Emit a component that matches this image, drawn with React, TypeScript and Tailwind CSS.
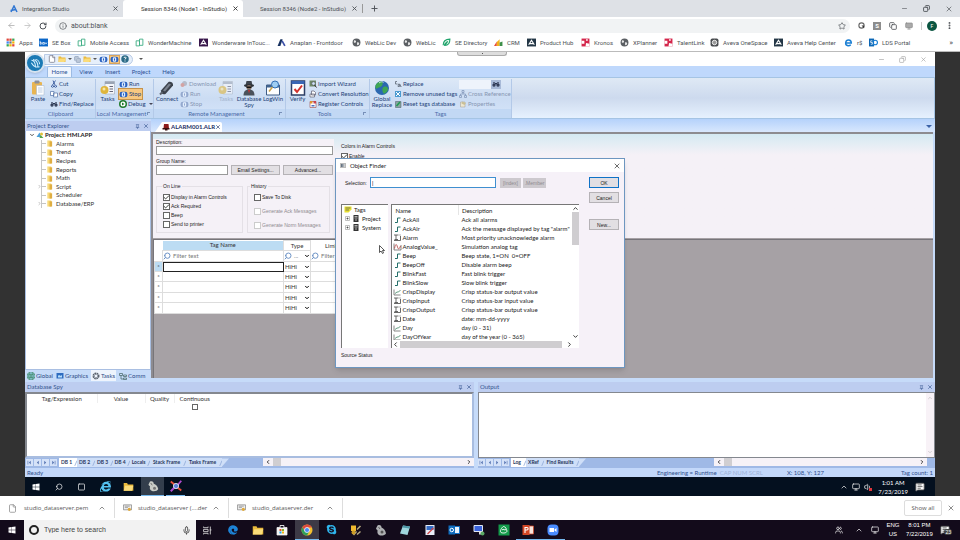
import React, { useState } from 'react';
import {
  ArrowLeft, ArrowRight, Check, ChevronDown, ChevronRight, ChevronUp, Copy, File, Globe, Info,
  MessageSquareText, Mic, Minus, Monitor, MoreVertical, Pin, Plus, RotateCw, Search, Square, Star, Users, Volume1, X,
} from 'lucide-react';
import { FaWindows, FaSkype, FaEdge, FaInternetExplorer } from 'react-icons/fa';

type Kind = 'step' | 'text' | 'wave' | 'line';

const BOOKMARKS: { label: string; icon: string; width: string }[] = [
  { label: 'Apps', icon: 'apps', width: 'w-[33px]' },
  { label: 'SE Box', icon: 'box', width: 'w-[38px]' },
  { label: 'Mobile Access', icon: 'mobile', width: 'w-[58px]' },
  { label: 'WonderMachine', icon: 'mobile', width: 'w-[64px]' },
  { label: 'Wonderware InTouc...', icon: 'avevaPurple', width: 'w-[78px]' },
  { label: 'Anaplan - Frontdoor', icon: 'anaplan', width: 'w-[75px]' },
  { label: 'WebLic Dev', icon: 'globe', width: 'w-[51px]' },
  { label: 'WebLic', icon: 'globe', width: 'w-[39px]' },
  { label: 'SE Directory', icon: 'leaf', width: 'w-[52px]' },
  { label: 'CRM', icon: 'crm', width: 'w-[33px]' },
  { label: 'Product Hub', icon: 'aveva', width: 'w-[54px]' },
  { label: 'Kronos', icon: 'kronos', width: 'w-[39px]' },
  { label: 'XPlanner', icon: 'globe', width: 'w-[44px]' },
  { label: 'TalentLink', icon: 'kronos', width: 'w-[46px]' },
  { label: 'Aveva OneSpace', icon: 'one', width: 'w-[64px]' },
  { label: 'Aveva Help Center', icon: 'aveva', width: 'w-[70px]' },
  { label: 'r$', icon: 'edge', width: 'w-[25px]' },
  { label: 'LDS Portal', icon: 'share', width: 'w-[48px]' },
];

const TREE = [
  { name: 'Alarms' },
  { name: 'Trend' },
  { name: 'Recipes' },
  { name: 'Reports' },
  { name: 'Math' },
  { name: 'Script', open: true },
  { name: 'Scheduler' },
  { name: 'Database/ERP', open: true },
];

const TAGS: { name: string; desc: string; kind: Kind }[] = [
  { name: 'AckAll', desc: 'Ack all alarms', kind: 'step' },
  { name: 'AckAlr', desc: 'Ack the message displayed by tag "alarm"', kind: 'step' },
  { name: 'Alarm', desc: 'Most priority unacknowledge alarm', kind: 'text' },
  { name: 'AnalogValue_', desc: 'Simulation analog tag', kind: 'wave' },
  { name: 'Beep', desc: 'Beep state, 1=ON  0=OFF', kind: 'step' },
  { name: 'BeepOff', desc: 'Disable alarm beep', kind: 'step' },
  { name: 'BlinkFast', desc: 'Fast blink trigger', kind: 'step' },
  { name: 'BlinkSlow', desc: 'Slow blink trigger', kind: 'step' },
  { name: 'CrispDisplay', desc: 'Crisp status-bar output value', kind: 'line' },
  { name: 'CrispInput', desc: 'Crisp status-bar input value', kind: 'text' },
  { name: 'CrispOutput', desc: 'Crisp status-bar output value', kind: 'text' },
  { name: 'Date', desc: 'date: mm-dd-yyyy', kind: 'text' },
  { name: 'Day', desc: 'day (0 - 31)', kind: 'line' },
  { name: 'DayOfYear', desc: 'day of the year (0 - 365)', kind: 'line' },
];

function SiteIcon({ name }: { name: string }) {
  return (
    <svg viewBox="0 0 16 16" className="size-[9px] shrink-0">
      {name === 'apps' &&
        [1, 6, 11].map((y, r) =>
          [1, 6, 11].map((x, c) => (
            <rect key={`${x}${y}`} x={x} y={y} width="4" height="4" fill={['#e0453a', '#e0453a', '#3aa757', '#4285f4', '#777', '#f4b400', '#3aa757', '#f4b400', '#e0453a'][r * 3 + c]} />
          )),
        )}
      {name === 'box' && (
        <>
          <rect y="1" width="16" height="14" fill="#0a66c8" />
          <path d="M2 5v6h2V8H2M6.500 8h3v3h-3zM11 8l3 3M14 8l-3 3" stroke="#fff" strokeWidth="1.300" fill="none" />
        </>
      )}
      {name === 'mobile' && <path d="M2 5h6v9H2zM8 2h6v11H8z" fill="none" stroke="#3fae84" strokeWidth="1.600" />}
      {(name === 'aveva' || name === 'avevaPurple') && (
        <>
          <rect y="1" width="16" height="14" fill={name === 'aveva' ? '#243746' : '#37154a'} />
          <path d="M3 12 8 4l5 8M5 10h7" stroke="#fff" strokeWidth="2" fill="none" />
        </>
      )}
      {name === 'anaplan' && (
        <>
          <path d="M1 14 6 2h4L6 14z" fill="#16305f" />
          <path d="m9 5 5 9" stroke="#3c50a8" strokeWidth="3" />
        </>
      )}
      {name === 'globe' && (
        <>
          <circle cx="8" cy="8" r="7" fill="#5b5f63" />
          <path d="M4 4c2 0 4 1 3 3S4 9 3 7zM9 8c3-1 5 1 3 4l-3 1z" fill="#e8e8e8" />
        </>
      )}
      {name === 'leaf' && <path d="M2 13C2 5 6 2 14 2c0 7-4 11-9 11l5-7-6 6" fill="#dff5e9" stroke="#1fa36b" strokeWidth="2" />}
      {name === 'crm' && (
        <>
          <path d="M0 14 5 6v8z" fill="#e6493a" />
          <path d="M5 14V7l5-5v12z" fill="#f2b21b" />
          <path d="M10 14V8l5-2v8z" fill="#3d8f48" />
        </>
      )}
      {name === 'kronos' && (
        <>
          <rect x="1" y="1" width="14" height="14" fill="#d4264b" />
          <path d="M1 5h5v5H1zM9 9l6 1v5H8zM9 2h3v3H9z" fill="#fff" />
        </>
      )}
      {name === 'one' && (
        <>
          <rect x="1" y="1" width="14" height="14" rx="3" fill="#4a4d50" />
          <circle cx="8" cy="8" r="4" fill="#999" stroke="#fff" strokeWidth="1.500" />
        </>
      )}
      {name === 'edge' && <path d="M3 9h10c0-7-9-7-10-1-1 6 6 7 9 4" fill="none" stroke="#1b7fd3" strokeWidth="2.500" />}
      {name === 'share' && (
        <>
          <rect y="1" width="9" height="14" fill="#0b66b5" />
          <circle cx="11" cy="8" r="4" fill="none" stroke="#1b7fd3" strokeWidth="2" />
          <path d="M6 5H3v3h3v3H3" stroke="#fff" strokeWidth="1.300" fill="none" />
        </>
      )}
    </svg>
  );
}

// ---- small glyphs used over the ribbon and the panels ----

function Folder({ className = 'size-[8px]' }: { className?: string }) {
  return (
    <svg viewBox="0 0 16 16" className={className}>
      <path d="M1 3h5l1 2h8v9H1z" fill="#e9b93c" />
      <path d="M3 7h12l-2 7H1z" fill="#fbdc7a" />
    </svg>
  );
}

function BookIcon() {
  return (
    <svg viewBox="0 0 16 16" className="size-[7px] shrink-0">
      <path d="M3 1h9v14H3z" fill="#f8d978" />
      <path d="M8 3h6v12H8z" fill="#dfae42" />
    </svg>
  );
}

function Pill({ color = '#2a62c0' }: { color?: string }) {
  return (
    <svg viewBox="0 0 16 12" className="h-[7px] w-[9px] shrink-0">
      <rect x="1" y="1" width="14" height="10" rx="4" fill={color} />
      <rect x="5" y="2" width="6" height="8" rx="2" fill="#e8f2ff" />
      <path d="M7 4h2v4H7z" fill={color} />
    </svg>
  );
}

function KindIcon({ kind }: { kind: Kind }) {
  return (
    <svg viewBox="0 0 16 16" className="h-[8px] w-[9px] shrink-0" fill="none">
      {kind === 'step' && <path d="M3 13h5V4h6" stroke="#256f6a" strokeWidth="2" />}
      {kind === 'text' && <path d="M1 2h9M5 2v9M1 13h13V4M2 11h7M12 2h2" stroke="#444" strokeWidth="1.600" />}
      {kind === 'wave' && (
        <>
          <path d="M1 1v13h14V4" stroke="#555" strokeWidth="1.400" />
          <path d="M2 11C4 1 6 1 8 8s4 3 6-2" stroke="#a33" strokeWidth="1.500" />
        </>
      )}
      {kind === 'line' && (
        <>
          <path d="M1 3v11h13" stroke="#555" strokeWidth="1.400" />
          <path d="m3 11 4-3h3l4-4" stroke="#2d7a55" strokeWidth="1.500" />
        </>
      )}
    </svg>
  );
}

function BigIcon({ name }: { name: string }) {
  return (
    <svg viewBox="0 0 32 32" className="size-[16px] shrink-0">
      {name === 'paste' && (
        <>
          <rect x="4" y="4" width="20" height="25" rx="2" fill="#e8b552" />
          <rect x="9" y="1" width="10" height="6" rx="2" fill="#8b8f99" />
          <path d="M13 11h15v19H13z" fill="#fff" stroke="#9fb0ca" />
          <path d="M16 16h9M16 20h9M16 24h9" stroke="#a9bdd8" strokeWidth="1.500" />
        </>
      )}
      {name === 'tasks' && (
        <>
          <path d="M10 3h19v25H10z" fill="#f4f6fa" stroke="#8f98a8" />
          <path d="M10 3h19v5H10z" fill="#9aa4b4" />
          <path d="M19 13h7M19 18h7M19 23h7" stroke="#667" strokeWidth="2" />
          <circle cx="9" cy="20" r="8" fill="#dfb53c" />
          <circle cx="8" cy="18" r="3" fill="#f7e6a5" />
        </>
      )}
      {name === 'connect' && (
        <>
          <path d="m4 21 15-17c5-2 10 2 9 7L13 28c-6 2-10-2-9-7z" fill="#3c424c" />
          <path d="m8 21 12-14 4 2-12 14z" fill="#79818d" />
          <path d="m2 29 5-5" stroke="#5b626d" strokeWidth="4" />
        </>
      )}
      {name === 'spy' && (
        <>
          <path d="M9 11 11 2h10l2 9z" fill="#3e434b" />
          <ellipse cx="16" cy="11" rx="10" ry="3" fill="#2e333a" />
          <circle cx="16" cy="15" r="5" fill="#8a7466" />
          <path d="M11 13h10v3H11z" fill="#111" />
          <path d="M5 31c0-9 5-12 11-12s11 3 11 12z" fill="#4b525c" />
          <path d="m14 20 2 7 2-7z" fill="#c33" />
        </>
      )}
      {name === 'log' && (
        <>
          <path d="M3 10h26v20H3z" fill="#fdfefe" stroke="#3d5c86" strokeWidth="2" />
          <path d="M3 10h26v5H3z" fill="#41638f" />
          <circle cx="20" cy="9" r="7" fill="#9ecdf2" stroke="#2f6db3" strokeWidth="2" />
          <path d="m15 14-7 9" stroke="#caa24a" strokeWidth="3" />
        </>
      )}
      {name === 'verify' && (
        <>
          <path d="M3 2h26v28H3z" fill="#fff" stroke="#2d3f66" strokeWidth="3" />
          <path d="M3 2h26v6H3z" fill="#3a66b4" />
          <path d="m9 18 5 6 10-13" fill="none" stroke="#d2322d" strokeWidth="4" />
        </>
      )}
      {name === 'global' && (
        <>
          <circle cx="16" cy="16" r="14" fill="#2b68b0" />
          <path d="M7 6c6-6 12-3 10 3s-9 5-12 9c-4-4-2-9 2-12zM19 14c6-2 9 0 9 4s-5 10-8 9-5-10-1-13z" fill="#3fa653" />
          <path d="M10 6c3-3 8-3 9-1" stroke="#fff" strokeWidth="2" fill="none" opacity=".7" />
        </>
      )}
    </svg>
  );
}

function SmallIcon({ name }: { name: string }) {
  return (
    <svg viewBox="0 0 16 16" className="size-[8px] shrink-0" fill="none">
      {name === 'cut' && <path d="M6 1l4 9M11 1 5 10M5 11a2 2 0 1 0 .1 0M11 11a2 2 0 1 0 .1 0" stroke="#35579b" strokeWidth="1.800" />}
      {name === 'copy' && <path d="M1 3h7v8H1zM7 6h8v8H7z" fill="#fff" stroke="#5473a8" strokeWidth="1.400" />}
      {name === 'find' && <path d="M4 4v4M12 4v4M4 12a2 2 0 1 0 0-4 2 2 0 0 0 0 4M12 12a2 2 0 1 0 0-4 2 2 0 0 0 0 4M6 7h4" stroke="#2a3550" strokeWidth="2.500" />}
      {name === 'debug' && (
        <>
          <circle cx="8" cy="8" r="6.500" fill="#fff" stroke="#1f7a2c" strokeWidth="3" />
          <path d="m6 5 5 3-5 3z" fill="#1f7a2c" />
        </>
      )}
      {name === 'download' && (
        <>
          <circle cx="9" cy="7" r="5" fill="#b4bccb" />
          <circle cx="5" cy="10" r="4" fill="#d3a3a3" />
        </>
      )}
      {name === 'import' && (
        <>
          <path d="M1 1h13v12H1z" fill="#708a68" />
          <circle cx="9" cy="7" r="3.500" fill="#cfe3f5" stroke="#445" />
          <path d="m11 10 4 5" stroke="#333" strokeWidth="2" />
        </>
      )}
      {name === 'convert' && <path d="M5 2h5l3 3v5H5zM2 8h9v6H2z" fill="#fff" stroke="#667" strokeWidth="1.500" />}
      {name === 'register' && (
        <>
          <path d="M2 3h12v12H2z" fill="#fff" stroke="#a05c5c" strokeWidth="1.400" />
          <path d="M2 2h5v5H2z" fill="#e0912f" />
          <path d="M9 2h5v5H9z" fill="#c8434e" />
          <path d="M5 10h6v3H5z" fill="#4b74c4" />
        </>
      )}
      {name === 'replace' && <path d="M3 3v5h4M3 3h3M9 8h2v5H8zM13 9v4h2" stroke="#55606f" strokeWidth="1.500" />}
      {name === 'remove' && (
        <>
          <path d="M2 2h12v12H2z" fill="#4a9ad0" />
          <path d="m4 4 8 8M12 4l-8 8" stroke="#fff" strokeWidth="2" />
        </>
      )}
      {name === 'reset' && (
        <>
          <path d="M3 3h11v12H3z" fill="#8aa7a0" stroke="#456" />
          <path d="m5 12 7-8" stroke="#1f9a52" strokeWidth="3" />
        </>
      )}
      {name === 'xref' && <path d="M6 1h4v4H6zM1 11h4v4H1zM11 11h4v4h-4zM8 5v3M3 11V8h10v3" stroke="#8295b9" strokeWidth="1.500" />}
      {name === 'props' && (
        <>
          <path d="M3 4h9v10H3z" fill="#eee7d0" stroke="#9d9a90" />
          <path d="m6 3 8 3-3 4-6-3z" fill="#c9bf96" />
        </>
      )}
    </svg>
  );
}

function Cmd({ icon, children, muted, active }: { icon: React.ReactNode; children: React.ReactNode; muted?: boolean; active?: boolean }) {
  return (
    <button
      type="button"
      className={`flex h-[10px] items-center gap-px whitespace-nowrap ${muted ? 'text-[#8796b3]' : 'text-[#233f78]'} ${active ? 'w-[23px] bg-[#f8c880] outline outline-[#c5924a]' : ''}`}
    >
      {icon}
      {children}
    </button>
  );
}

function Big({ icon, lines, muted, width }: { icon: string; lines: string[]; muted?: boolean; width: string }) {
  return (
    <button type="button" className={`flex flex-col items-center pt-px text-[6px]/[6px] ${width} ${muted ? 'text-[#8796b3] opacity-60' : 'text-[#233f78]'}`}>
      <BigIcon name={icon} />
      {lines.map((l) => (
        <span key={l}>{l}</span>
      ))}
    </button>
  );
}

function Group({ title, width, children, corner }: { title: string; width: string; children: React.ReactNode; corner?: boolean }) {
  return (
    <section className={`flex flex-col border-r border-[#b3c9e8] bg-linear-to-b from-[#dce8f7] via-[#cbdcf3] to-[#d5e5fa] ${width}`}>
      <div className="flex min-h-0 flex-1 items-start">{children}</div>
      <h2 className="flex h-[9px] shrink-0 items-center justify-center bg-[#c2d8f4] text-[6px]/[8px] text-[#4a6aa8]">
        <span className="flex-1 text-center whitespace-nowrap">{title}</span>
        {corner && <span className="mr-[3px] size-[3px] border-t border-l border-[#7890b8]" />}
      </h2>
    </section>
  );
}

function CheckField({ label, checked = false, disabled }: { label: string; checked?: boolean; disabled?: boolean }) {
  const [on, setOn] = useState(checked);
  return (
    <label className={`flex items-center gap-px whitespace-nowrap ${disabled ? 'text-[#8f8b90]' : 'text-[#222]'}`}>
      <span className="grid *:col-start-1 *:row-start-1">
        <input
          type="checkbox"
          checked={on}
          disabled={disabled}
          onChange={() => setOn(!on)}
          className="size-[7px] appearance-none border border-[#666] bg-white disabled:border-[#ccc]"
        />
        {on && <Check className="pointer-events-none size-[7px] text-[#222]" strokeWidth={3} />}
      </span>
      {label}
    </label>
  );
}

function PanelHead({ title }: { title: string }) {
  return (
    <div className="flex h-[10px] shrink-0 items-center bg-[#bdcdf0] px-[2px] text-[#35558f]">
      <span className="flex-1">{title}</span>
      <Pin className="mr-[3px] size-[5px]" strokeWidth={2.500} />
      <X className="size-[6px]" strokeWidth={2.500} />
    </div>
  );
}

function SheetNav() {
  return (
    <div className="flex gap-px pt-px pr-[2px]">
      {['First', 'Previous', 'Next', 'Last'].map((g, i) => (
        <button key={g} type="button" aria-label={g} className="flex size-[7px] items-center justify-center bg-[#d5e2f8] text-[#516fae]">
          <svg viewBox="0 0 8 8" className="size-[5px]">
            <path d={i < 2 ? 'M6 1 3 4l3 3z' : 'm2 1 3 3-3 3z'} fill="currentColor" />
            {i === 0 && <path d="M1 1h1v6H1z" fill="currentColor" />}
            {i === 3 && <path d="M6 1h1v6H6z" fill="currentColor" />}
          </svg>
        </button>
      ))}
    </div>
  );
}

function Sheets({ items }: { items: { label: string; width: string }[] }) {
  return (
    <div className="flex">
      {items.map((t, i) => (
        <button
          key={t.label}
          type="button"
          className={`flex h-[9px] items-center justify-end text-[5px]/[9px] font-bold whitespace-nowrap text-[#26355c] ${t.width} ${i === 0 ? 'bg-white' : 'bg-[#cfdff8]'}`}
        >
          <span className="flex-1 text-center">{t.label}</span>
          <svg viewBox="0 0 4 9" className="h-[9px] w-[3px]">
            <path d="M4 2 1 9" stroke="#8ba6d6" fill="none" />
          </svg>
        </button>
      ))}
      <svg viewBox="0 0 8 9" className="h-[9px] w-[7px]">
        <path d="M0 0h8L0 9z" fill="#cfdff8" />
      </svg>
    </div>
  );
}

function HScroll({ className }: { className: string }) {
  return (
    <div className={`flex h-[8px] items-center bg-[#f6f2f7] ${className}`}>
      <ChevronRight className="mx-[2px] size-[6px] rotate-180" strokeWidth={3} />
      <span className="h-full w-[8px] bg-[#d0ced1]" />
      <ChevronRight className="mr-[2px] ml-auto size-[6px]" strokeWidth={3} />
    </div>
  );
}

function BrowserChrome() {
  const tabs = [
    { label: 'Integration Studio', width: 'w-[123px]', pad: 'pl-[10px]' },
    { label: 'Session 8346 (Node1 - InStudio)', width: 'w-[120px]', pad: 'pl-[18px]' },
    { label: 'Session 8346 (Node2 - InStudio)', width: 'w-[119px]', pad: 'pl-[17px]' },
  ];
  return (
    <header className="font-[Roboto,sans-serif] text-[6px]/[8px] text-[#4d5156]">
      <div className="flex h-[17px] items-center bg-[#dee1e6]">
        {tabs.map((t, i) => (
          <div key={t.label} className={`flex h-full items-center ${t.width} ${t.pad} ${i === 1 ? 'rounded-t-[3px] bg-white text-[#333]' : ''}`}>
            {i === 0 && (
              <svg viewBox="0 0 16 16" className="mr-[4px] size-[8px]">
                <path d="M2 14 8 2l6 12M1 11l11-2" fill="none" stroke="#3076d2" strokeWidth="3" />
              </svg>
            )}
            <span className="flex-1 whitespace-nowrap">{t.label}</span>
            <button type="button" aria-label="Close tab" className="mr-[4px]">
              <X className="size-[7px]" strokeWidth={3} />
            </button>
          </div>
        ))}
        <span className="h-[9px] w-px bg-[#999]" />
        <button type="button" aria-label="New tab" className="ml-[7px]">
          <Plus className="size-[9px]" strokeWidth={2.500} />
        </button>
        <div className="ml-auto flex items-center gap-[15px] pr-[7px]">
          <Minus className="size-[7px]" />
          <Copy className="size-[7px] -scale-x-100" strokeWidth={3} />
          <X className="size-[8px]" />
        </div>
      </div>
      <div className="flex h-[17px] items-center bg-white pl-[7px]">
        <ArrowLeft className="size-[9px] text-[#aaa]" />
        <ArrowRight className="ml-[7px] size-[9px] text-[#bbb]" />
        <RotateCw className="ml-[7px] size-[8px]" strokeWidth={3} />
        <div className="ml-[8px] flex h-[14px] flex-1 items-center rounded-full bg-[#f1f3f4] pr-[4px] pl-[4px]">
          <Info className="size-[8px]" />
          <input aria-label="Address" defaultValue="about:blank" className="ml-[4px] flex-1 bg-transparent text-[7px] outline-none" />
          <Star className="size-[8px]" />
        </div>
        <div className="flex items-center gap-[8px] pr-[6px] pl-[8px]">
          <svg viewBox="0 0 16 16" className="size-[7px]">
            <circle cx="8" cy="8" r="6" fill="none" stroke="#666" strokeWidth="2.500" />
            <path d="M8 8h6v6z" fill="#333" />
          </svg>
          <span className="flex size-[8px] items-center justify-center bg-[#8d8d8d] text-[6px] font-bold text-white">S</span>
          <Copy className="size-[8px]" strokeWidth={2.500} />
          <Monitor className="size-[8px] fill-[#aaa] text-[#888]" />
          <span className="h-[8px] w-px bg-[#ccc]" />
          <span className="-ml-[3px] flex size-[10px] items-center justify-center rounded-full bg-[#0b5541] text-[5px] text-white">F</span>
          <MoreVertical className="size-[9px]" strokeWidth={3} />
        </div>
      </div>
      <nav className="flex h-[17px] items-center overflow-hidden bg-white pl-[6px]">
        {BOOKMARKS.map((b, i) => (
          <a key={b.label + i} href="#" className={`flex shrink-0 items-center gap-[4px] whitespace-nowrap ${b.width}`}>
            <SiteIcon name={b.icon} />
            {b.label}
          </a>
        ))}
        <span className="mr-[7px] ml-auto text-[8px]">»</span>
      </nav>
    </header>
  );
}

function Ribbon() {
  return (
    <>
      <div className="flex h-[14px] shrink-0 items-center bg-white pr-[8px] pl-[19px]">
        <div className="flex h-[11px] w-[89px] items-center gap-[2px] rounded-r-full border border-[#b9cbe6] bg-[#e6effb] pl-[3px]">
          <File className="size-[8px] fill-white text-[#667]" />
          <Folder />
          <span className="border-x-2 border-t-2 border-x-transparent border-t-[#555]" />
          <Copy className="size-[7px] fill-[#bcc8d8] text-[#7f93ad]" />
          <Folder />
          <span className="border-x-2 border-t-2 border-x-transparent border-t-[#555]" />
          <Pill />
          <span className="bg-[#f8c880] outline outline-[#d9a45c]"><Pill /></span>
          <svg viewBox="0 0 16 16" className="size-[8px]">
            <circle cx="8" cy="8" r="7.500" fill="#2a6a86" />
            <path d="M6 6c0-3 5-2 4 0L8 9M8 11v2" stroke="#fff" strokeWidth="2" fill="none" />
          </svg>
        </div>
        <span className="ml-[6px] border-x-2 border-t-2 border-x-transparent border-t-[#555]" />
        <div className="ml-auto flex items-center gap-[14px] text-[#999]">
          <Minus className="size-[7px]" />
          <Copy className="size-[7px] -scale-x-100" />
          <X className="size-[7px]" />
        </div>
      </div>
      <nav className="flex h-[11px] shrink-0 bg-[#bfd8fc] pl-[22px] text-[#2b4f93]">
        <button type="button" className="w-[25px] rounded-t-[2px] border-x border-t border-[#9cbbe4] bg-[#eef4fd]">
          Home
        </button>
        <button type="button" className="w-[28px]">View</button>
        <button type="button" className="w-[25px]">Insert</button>
        <button type="button" className="w-[32px]">Project</button>
        <button type="button" className="w-[23px]">Help</button>
      </nav>
      <div className="flex h-[42px] shrink-0 border border-[#a5c4e4] bg-linear-to-b from-[#dfe9f5] via-[#cddaee] to-[#e6f1fe] pt-px">
        <Group title="Clipboard" width="w-[70px]">
          <Big icon="paste" lines={['Paste']} width="w-[24px]" />
          <div>
            <Cmd icon={<SmallIcon name="cut" />}>Cut</Cmd>
            <Cmd icon={<SmallIcon name="copy" />}>Copy</Cmd>
            <Cmd icon={<SmallIcon name="find" />}>Find/Replace</Cmd>
          </div>
        </Group>
        <Group title="Local Management" width="w-[58px]" corner>
          <Big icon="tasks" lines={['Tasks']} width="w-[23px]" />
          <div>
            <Cmd icon={<Pill />}>Run</Cmd>
            <Cmd icon={<Pill />} active>Stop</Cmd>
            <Cmd icon={<SmallIcon name="debug" />}>
              Debug
              <span className="ml-[2px] border-x-2 border-t-2 border-x-transparent border-t-[#445]" />
            </Cmd>
          </div>
        </Group>
        <Group title="Remote Management" width="w-[132px]" corner>
          <Big icon="connect" lines={['Connect']} width="w-[26px]" />
          <div className="w-[36px]">
            <Cmd icon={<SmallIcon name="download" />} muted>Download</Cmd>
            <Cmd icon={<Pill color="#94a9cf" />} muted>Run</Cmd>
            <Cmd icon={<Pill color="#94a9cf" />} muted>Stop</Cmd>
          </div>
          <Big icon="tasks" lines={['Tasks']} muted width="w-[20px]" />
          <Big icon="spy" lines={['Database', 'Spy']} width="w-[26px]" />
          <Big icon="log" lines={['LogWin']} width="w-[22px]" />
        </Group>
        <Group title="Tools" width="w-[84px]" corner>
          <Big icon="verify" lines={['Verify']} width="w-[23px]" />
          <div>
            <Cmd icon={<SmallIcon name="import" />}>Import Wizard</Cmd>
            <Cmd icon={<SmallIcon name="convert" />}>Convert Resolution</Cmd>
            <Cmd icon={<SmallIcon name="register" />}>Register Controls</Cmd>
          </div>
        </Group>
        <Group title="Tags" width="w-[142px]">
          <Big icon="global" lines={['Global', 'Replace']} width="w-[24px]" />
          <div className="w-[65px]">
            <Cmd icon={<SmallIcon name="replace" />}>Replace</Cmd>
            <Cmd icon={<SmallIcon name="remove" />}>Remove unused tags</Cmd>
            <Cmd icon={<SmallIcon name="reset" />}>Reset tags database</Cmd>
          </div>
          <div>
            <div className="flex h-[10px] items-center">
              <input aria-label="Find tag" className="h-[9px] w-[32px] bg-[#eef3fb]" />
              <button type="button" aria-label="Find" className="flex h-[9px] w-[10px] items-center justify-center bg-[#a8bad8]">
                <SmallIcon name="find" />
              </button>
            </div>
            <Cmd icon={<SmallIcon name="xref" />} muted>Cross Reference</Cmd>
            <Cmd icon={<SmallIcon name="props" />} muted>Properties</Cmd>
          </div>
        </Group>
      </div>
      <div className="absolute top-px left-0 flex size-[20px] items-center justify-center rounded-full border-2 border-[#d5e3f0] bg-[#1b7ab5] shadow">
        <svg viewBox="0 0 16 16" className="size-[13px]">
          <path d="M3 4c4 0 5 4 5 9M5 3c4 1 6 4 6 9M3 7c2 4 6 6 10 5M8 3c3 0 5 3 5 6" fill="none" stroke="#d5f0ff" strokeWidth="1.300" />
        </svg>
      </div>
    </>
  );
}

function ProjectExplorer() {
  return (
    <aside className="mt-[2px] flex w-[126px] shrink-0 flex-col">
      <PanelHead title="Project Explorer" />
      <div className="flex-1 border-x border-b border-[#a9bfe2] bg-white pl-[3px]">
        <ul className="flex h-[77px] flex-col">
          <li className="flex flex-1 items-center font-bold text-[#222]">
            <ChevronDown className="size-[6px]" strokeWidth={3} />
            <svg viewBox="0 0 16 16" className="mx-px size-[8px]">
              <path d="M1 12 7 3l4 9z" fill="#4b9fd8" />
              <path d="M7 14 9 8l6 6z" fill="#57a84b" />
              <circle cx="11" cy="6" r="3" fill="#e0c13a" />
            </svg>
            <span>Project: HMI.APP</span>
          </li>
          {TREE.map((n) => (
            <li key={n.name} className="flex flex-1 items-center pl-[8px] text-[#333]">
              <span className="flex w-[4px] justify-start">
                {n.open && <ChevronRight className="size-[5px] shrink-0 text-[#777]" />}
              </span>
              <span className="flex h-full w-[5px] items-center border-l border-[#c5c5c5]">
                <span className="h-px w-full bg-[#c5c5c5]" />
              </span>
              <BookIcon />
              <span className="ml-[3px]">{n.name}</span>
            </li>
          ))}
        </ul>
      </div>
      <div className="flex h-[11px] items-center gap-[3px] pl-[2px] text-[#2b4a86]">
        <span className="flex items-center gap-px"><Globe className="size-[8px] rounded-full bg-[#2f7d4d] text-[#9fd0f0]" />Global</span>
        <span className="flex items-center gap-px">
          <svg viewBox="0 0 16 16" className="size-[8px]">
            <path d="M1 2h14v11H1z" fill="#2e6cc0" />
            <path d="M4 8c3-6 4 3 8-2v5H4z" fill="#b6defc" />
          </svg>
          Graphics
        </span>
        <span className="flex h-full items-center gap-px bg-[#eef4fd] px-px">
          <svg viewBox="0 0 16 16" className="size-[8px]">
            <circle cx="8" cy="8" r="5" fill="none" stroke="#59626e" strokeWidth="4" strokeDasharray="3 1" />
          </svg>
          Tasks
        </span>
        <span className="flex items-center gap-px">
          <svg viewBox="0 0 16 16" className="size-[8px]" fill="none" stroke="#4a6a6a" strokeWidth="1.500">
            <path d="M1 3h6v4H1zM9 6h6v3H9zM9 12h6v3H9zM4 7v7h5" />
          </svg>
          Comm
        </span>
      </div>
    </aside>
  );
}

const FORM_BUTTON = 'h-[10px] border border-[#b5b2b6] bg-[#e2dfe3] text-[#222]';

function AlarmDocument() {
  return (
    <main className="flex min-w-0 flex-1 flex-col">
      <div className="flex h-[13px] shrink-0 items-end bg-linear-to-b from-[#b5d2fb] to-[#d8e7fd] pl-[4px]">
        <svg viewBox="0 0 7 10" className="h-[10px] w-[7px]">
          <path d="M0 10 7 0v10z" fill="#fff" />
        </svg>
        <div className="flex h-[10px] w-[60px] items-center rounded-tr-[2px] bg-white font-bold text-[#1c2f66]">
          <svg viewBox="0 0 16 16" className="mr-px size-[8px] shrink-0">
            <path d="M4 2h9l1 9H3z" fill="#8c1c1c" />
            <path d="M1 10h14v3H1zM6 13h5v2H6z" fill="#3a1010" />
          </svg>
          <span className="flex-1 text-[6px] tracking-normal">ALARM001.ALR</span>
          <X className="mr-px size-[6px] shrink-0" strokeWidth={2.500} />
        </div>
        <span className="mr-[3px] mb-[4px] ml-auto border-x-[3px] border-t-[3px] border-x-transparent border-t-[#3b62a8]" />
      </div>
      <div className="mr-[2px] mb-[3px] flex min-h-0 flex-1 flex-col border-t-2 border-l-2 border-[#8d8b90] bg-[#a6a1a5]">
        <div className="flex h-[104px] shrink-0 bg-linear-to-b from-[#d4e9f2] via-[#f5f1f7] via-20% to-[#f5f1f7] font-['Liberation_Sans',sans-serif] text-[5px]/[7px] text-[#222]">
          <div className="mt-[5px] flex w-[181px] flex-col bg-[#f5f1f7] pl-[3px]">
            <label htmlFor="description">Description:</label>
            <input id="description" className="h-[9px] w-[177px] border border-[#999] bg-white" />
            <label htmlFor="group" className="mt-[3px]">Group Name:</label>
            <div className="flex gap-[3px]">
              <input id="group" className="h-[10px] w-[72px] border border-[#999] bg-white" />
              <button type="button" className={`w-[49px] ${FORM_BUTTON}`}>Email Settings...</button>
              <button type="button" className={`w-[50px] ${FORM_BUTTON}`}>Advanced...</button>
            </div>
            <div className="mt-[8px] flex gap-[4px]">
              <fieldset className="h-[50px] w-[87px] border border-[#e4e0e6] pl-[6px]">
                <legend className="-ml-px px-px">On Line</legend>
                <div className="flex flex-col gap-[2px] pt-[4px]">
                  <CheckField label="Display in Alarm Controls" checked />
                  <CheckField label="Ack Required" checked />
                  <CheckField label="Beep" />
                  <CheckField label="Send to printer" />
                </div>
              </fieldset>
              <fieldset className="h-[50px] w-[83px] border border-[#e4e0e6] pl-[6px]">
                <legend className="-ml-[4px] px-px">History</legend>
                <div className="flex flex-col gap-[7px] pt-[4px]">
                  <CheckField label="Save To Disk" />
                  <CheckField label="Generate Ack Messages" disabled />
                  <CheckField label="Generate Norm Messages" disabled />
                </div>
              </fieldset>
            </div>
          </div>
          <div className="mt-[9px] ml-[7px] flex flex-col gap-[3px]">
            <span>Colors in Alarm Controls</span>
            <CheckField label="Enable" checked />
          </div>
        </div>
        <div className="mt-px min-h-0 flex-1 border-t border-l border-[#77757a]">
          <table className="w-[260px] table-fixed border-collapse bg-white text-[#333]">
            <thead>
              <tr className="h-[10px]">
                <th className="w-[8px]" />
                <th className="w-[121px] bg-[#bcdcf3] font-normal">Tag Name</th>
                <th className="w-[27px] border border-[#ddd] font-normal">Type</th>
                <th className="pl-[14px] text-left font-normal">Limit</th>
              </tr>
              <tr className="h-[11px] text-[#777]">
                <td />
                <td className="border border-[#ddd]">
                  <span className="flex items-center gap-[2px]"><Search className="size-[8px] -scale-x-100 text-[#6d93c6]" strokeWidth={3} />Filter text</span>
                </td>
                <td className="border border-[#ddd]">
                  <span className="flex items-center gap-[2px]">
                    <Search className="size-[8px] -scale-x-100 text-[#6d93c6]" strokeWidth={3} />...
                    <ChevronDown className="ml-auto size-[6px] text-black" strokeWidth={4} />
                  </span>
                </td>
                <td>
                  <span className="flex items-center gap-[2px]"><Search className="size-[8px] -scale-x-100 text-[#6d93c6]" strokeWidth={3} />Filter text</span>
                </td>
              </tr>
            </thead>
            <tbody>
              {['h-[10px]', 'h-[10px]', 'h-[11px]', 'h-[10px]', 'h-[11px]'].map((h, r) => (
                <tr key={r} className={h}>
                  <td className={`border border-[#ddd] text-center leading-[6px] ${r === 0 ? 'bg-[#bcdcf3]' : ''}`}>*</td>
                  <td className={r === 0 ? 'outline outline-[#222] -outline-offset-1' : 'border border-[#ddd]'} />
                  <td className="border border-[#ddd]">
                    <span className="flex items-center pl-px">
                      HiHi
                      <ChevronDown className="ml-auto size-[6px] text-black" strokeWidth={4} />
                    </span>
                  </td>
                  <td className="border border-[#ddd]" />
                </tr>
              ))}
            </tbody>
          </table>
        </div>
      </div>
    </main>
  );
}

function ObjectFinder() {
  const [selection, setSelection] = useState('');
  const button = "h-[11px] w-[30px] border border-[#b5b2b6] bg-[#e2dfe3] font-['Liberation_Sans',sans-serif] text-[5px] text-[#222]";
  return (
    <div role="dialog" aria-label="Object Finder" className="absolute top-[106px] left-[310px] flex h-[210px] w-[290px] flex-col border border-[#6d96c0] bg-[#f6f1f8] text-[#222] shadow-md">
      <div className="flex h-[13px] items-center bg-white pr-[3px] pl-[4px]">
        <span className="mr-[4px] h-[5px] w-[6px] border border-[#bbb] bg-linear-to-r from-[#567] to-[#ddd]" />
        <h1 className="flex-1 text-[6px]">Object Finder</h1>
        <button type="button" aria-label="Close"><X className="size-[8px]" /></button>
      </div>
      <div className="flex flex-1">
        <div className="flex w-[243px] flex-col pl-[5px]">
          <div className="mt-[5px] flex items-center font-['Liberation_Sans',sans-serif] text-[5px]">
            <label htmlFor="selection" className="w-[29px] pl-[4px]">Selection:</label>
            <input
              id="selection"
              value={selection}
              placeholder="|"
              onChange={(e) => setSelection(e.target.value)}
              className="h-[11px] w-[126px] border border-[#3f8fd0] bg-white px-px placeholder:text-black"
            />
            <button type="button" disabled className="ml-[4px] h-[10px] w-[21px] bg-[#cdc9ce] text-[#8d898e]">[Index]</button>
            <button type="button" disabled className="ml-[2px] h-[10px] w-[23px] bg-[#cdc9ce] text-[#8d898e]">.Member</button>
          </div>
          <div className="mt-[16px] flex h-[144px] gap-[3px]">
            <ul className="w-[48px] border-t border-l border-[#777] bg-white text-[6px]/[9px]">
              <li className="flex items-center gap-[2px] pl-[2px]">
                <svg viewBox="0 0 16 14" className="h-[7px] w-[8px]">
                  <path d="M1 1h14v6L9 13H1z" fill="#e8e032" />
                  <path d="M3 4h10M3 8h7" stroke="#555" strokeWidth="1.500" />
                </svg>
                Tags
              </li>
              {['Project', 'System'].map((n) => (
                <li key={n} className="flex items-center pl-[3px]">
                  <svg viewBox="0 0 10 10" className="size-[5px]" fill="none">
                    <path d="M1 1h8v8H1z" stroke="#aaa" strokeWidth="1.500" />
                    <path d="M5 3v4M3 5h4" stroke="#444" strokeWidth="1.500" />
                  </svg>
                  <svg viewBox="0 0 12 14" className="mx-[2px] h-[7px] w-[8px]">
                    <path d="M1 0h10v14H1z" fill="#333" />
                    <path d="M3 3h6M3 6h6M4 10h4" stroke="#ddd" strokeWidth="1.500" />
                  </svg>
                  {n}
                </li>
              ))}
            </ul>
            <div className="flex w-[190px] flex-col border-t border-l border-[#777] bg-white">
              <div className="flex min-h-0 flex-1">
                <div className="min-w-0 flex-1 overflow-hidden">
                  <table className="w-full table-fixed text-left text-[6px]/[9px]">
                    <thead>
                      <tr className="h-[10px]">
                        <th className="w-[66px] border-r border-[#e5e5e5] pl-[3px] font-normal">Name</th>
                        <th className="pl-[3px] font-normal">Description</th>
                      </tr>
                    </thead>
                    <tbody>
                      {TAGS.map((t) => (
                        <tr key={t.name} className="h-[9px]">
                          <td className="pl-px">
                            <span className="flex h-[9px] items-center">
                              <KindIcon kind={t.kind} />
                              {t.name}
                            </span>
                          </td>
                          <td className="pl-[3px] whitespace-pre">{t.desc}</td>
                        </tr>
                      ))}
                    </tbody>
                  </table>
                </div>
                <div className="flex w-[8px] flex-col items-center">
                  <ChevronUp className="size-[7px]" strokeWidth={3} />
                  <span className="h-[33px] w-[7px] bg-[#cfcdd0]" />
                  <ChevronDown className="mt-auto size-[7px]" strokeWidth={3} />
                </div>
              </div>
              <div className="flex h-[8px] items-center">
                <ChevronRight className="size-[7px] rotate-180" strokeWidth={3} />
                <span className="ml-px h-[7px] w-[162px] bg-[#cfcdd0]" />
                <ChevronRight className="ml-[4px] size-[7px]" strokeWidth={3} />
              </div>
            </div>
          </div>
          <span className="mt-[3px] font-['Liberation_Sans',sans-serif] text-[5px]/[8px]">Source Status</span>
        </div>
        <div className="flex flex-col pt-[5px] pl-[10px]">
          <button type="button" className={`${button} outline outline-[#0f72c6] -outline-offset-1`}>OK</button>
          <button type="button" className={`${button} mt-[4px]`}>Cancel</button>
          <button type="button" className={`${button} mt-[16px]`}>New...</button>
        </div>
      </div>
    </div>
  );
}

function Docks() {
  return (
    <div className="flex h-[87px] shrink-0 gap-[4px] bg-[#c6dbf9] pt-px">
      <section className="flex w-[449px] shrink-0 flex-col">
        <PanelHead title="Database Spy" />
        <div className="min-h-0 flex-1 border-2 border-[#84888f] border-r-[#a8bde0] border-b-[#a8bde0] bg-white">
          <table className="w-[188px] table-fixed text-[#333]">
            <thead>
              <tr className="h-[9px]">
                <th className="w-[70px] border-r border-[#eee] font-normal">Tag/Expression</th>
                <th className="w-[48px] border-r border-[#eee] font-normal">Value</th>
                <th className="w-[29px] border-r border-[#eee] font-normal">Quality</th>
                <th className="font-normal">Continuous</th>
              </tr>
            </thead>
            <tbody>
              <tr className="h-[8px]">
                <td />
                <td />
                <td />
                <td>
                  <input type="checkbox" aria-label="Continuous" className="mx-auto block size-[6px] appearance-none border border-[#666] bg-white" />
                </td>
              </tr>
            </tbody>
          </table>
        </div>
        <div className="flex h-[10px] items-start bg-[#9fb9e6] pl-px">
          <SheetNav />
          <Sheets
            items={[
              { label: 'DB 1', width: 'w-[18px]' },
              { label: 'DB 2', width: 'w-[18px]' },
              { label: 'DB 3', width: 'w-[18px]' },
              { label: 'DB 4', width: 'w-[17px]' },
              { label: 'Locals', width: 'w-[20px]' },
              { label: 'Stack Frame', width: 'w-[36px]' },
              { label: 'Tasks Frame', width: 'w-[36px]' },
            ]}
          />
          <HScroll className="ml-auto w-[211px]" />
        </div>
      </section>
      <section className="flex min-w-0 flex-1 flex-col">
        <PanelHead title="Output" />
        <div className="flex min-h-0 flex-1 justify-end border border-[#84888f] bg-white">
          <div className="flex w-[8px] flex-col items-center justify-between bg-[#f8f2f7] py-[2px] text-[#aaa]">
            <ChevronUp className="size-[6px]" />
            <ChevronDown className="size-[6px]" />
          </div>
        </div>
        <div className="flex h-[10px] items-start bg-[#9fb9e6] pr-[8px]">
          <SheetNav />
          <Sheets
            items={[
              { label: 'Log', width: 'w-[15px]' },
              { label: 'XRef', width: 'w-[18px]' },
              { label: 'Find Results', width: 'w-[35px]' },
            ]}
          />
          <HScroll className="ml-auto w-[213px]" />
        </div>
      </section>
    </div>
  );
}

function RemoteTaskbar() {
  return (
    <div className="flex h-[19px] shrink-0 items-center bg-[#04101f] pr-[10px] text-white">
      <FaWindows className="ml-[7px] size-[8px]" />
      <Search className="ml-[15px] size-[8px] -scale-x-100" />
      <Square className="ml-[14px] h-[8px] w-[9px]" />
      <FaInternetExplorer className="ml-[14px] size-[11px] text-[#55c3f2]" />
      <Folder className="ml-[12px] size-[11px]" />
      <span className="ml-[7px] flex h-full w-[23px] items-center justify-center border-b border-[#76b9ed] bg-[#333e4c]">
        <svg viewBox="0 0 16 16" className="size-[12px]">
          <path d="M4 2c3-1 5 0 5 3 3 1 5 3 6 7-1 2-3 3-6 3-4 0-6-3-5-6 0-2-2-1-2-3z" fill="#c9ccc6" />
          <circle cx="10" cy="11" r="2" fill="#777" />
          <path d="m5 4 2 3" stroke="#555" />
        </svg>
      </span>
      <span className="ml-[2px] flex h-full w-[19px] items-center justify-center border-b border-[#76b9ed]">
        <svg viewBox="0 0 16 16" className="size-[12px]" strokeWidth="2.500">
          <path d="m1 2 6 5M15 14l-5-4" stroke="#e8503a" />
          <path d="m15 1-5 6M1 15l6-6" stroke="#b04ad0" />
          <circle cx="8" cy="8" r="3.500" fill="#5c7fd8" stroke="#fff" strokeWidth="1" />
        </svg>
      </span>
      <div className="ml-auto flex items-center gap-[4px]">
        <ChevronUp className="size-[8px]" />
        <Monitor className="size-[8px]" />
        <span className="flex items-end">
          <Volume1 className="size-[8px]" />
          <span className="-ml-[3px] size-[3px] bg-[#e0343a]" />
        </span>
        <div className="ml-[2px] text-center text-[6px]/[9px]">
          <div>1:01 AM</div>
          <div>7/23/2019</div>
        </div>
        <MessageSquareText className="ml-[3px] size-[10px] fill-white text-[#555]" />
      </div>
    </div>
  );
}

function RemoteDesktop() {
  return (
    <div className="flex min-h-0 flex-1 border-t border-[#bbb] bg-[#323232] pr-[25px] pl-[25px]">
      <div className="relative flex min-w-0 flex-1 flex-col bg-[#c6dbf9] font-[Lato,sans-serif] text-[6px]/[8px]">
        <Ribbon />
        <div className="flex min-h-0 flex-1">
          <ProjectExplorer />
          <AlarmDocument />
        </div>
        <Docks />
        <footer className="flex h-[9px] shrink-0 items-center bg-[#c3d8fa] px-[2px] text-[#2f4f8c]">
          <span className="mr-auto">Ready</span>
          <span>Engineering = Runtime</span>
          <span className="ml-[3px] text-[#9db2d8]">CAP NUM SCRL</span>
          <span className="ml-[24px]">X: 108, Y: 127</span>
          <span className="ml-[77px]">Tag count: 1</span>
        </footer>
        <RemoteTaskbar />
        <div className="absolute top-0 left-[432px] flex h-[4px] w-[50px] items-center justify-center rounded-b-[3px] border-x border-b border-[#aaa] bg-[#ddd]">
          <span className="size-px bg-[#555]" />
        </div>
        <ObjectFinder />
        <svg viewBox="0 0 12 18" className="absolute top-[193px] left-[354px] h-[9px] w-[6px]">
          <path d="M1 1v14l3-3 3 5 2-1-2-5h4z" fill="#fff" stroke="#222" strokeWidth="1.500" />
        </svg>
      </div>
    </div>
  );
}

function DownloadShelf() {
  const files = [
    { name: 'studio_dataserver.pem', width: 'w-[115px]' },
    { name: 'studio_dataserver (....der', width: 'w-[114px]', cert: true },
    { name: 'studio_dataserver.der', width: 'w-[114px]', cert: true },
  ];
  return (
    <div className="flex h-[24px] shrink-0 items-center bg-white font-['Open_Sans',sans-serif] text-[#555]">
      {files.map((f) => (
        <div key={f.name} className={`flex h-[20px] items-center border-r border-[#ddd] pr-[8px] pl-[8px] ${f.width}`}>
          {f.cert ? (
            <svg viewBox="0 0 20 16" className="h-[8px] w-[9px] shrink-0">
              <path d="M1 1h18v11H1z" fill="#eee" stroke="#777" strokeWidth="1.500" />
              <path d="M4 4h11M4 7h7" stroke="#888" strokeWidth="1.500" />
              <circle cx="14" cy="11" r="3.500" fill="#e0a93a" />
            </svg>
          ) : (
            <File className="mr-px size-[9px] shrink-0 text-[#888]" />
          )}
          <span className="ml-[6px] flex-1 text-[6px] whitespace-nowrap">{f.name}</span>
          <ChevronUp className="size-[8px] shrink-0" />
        </div>
      ))}
      <button type="button" className="ml-auto h-[16px] w-[38px] rounded-[2px] border border-[#ddd] text-[6px]">Show all</button>
      <button type="button" aria-label="Close downloads" className="mr-[5px] ml-[5px]"><X className="size-[8px]" /></button>
    </div>
  );
}

function DockIcon({ name }: { name: string }) {
  if (name === 'edge') return <FaEdge className="size-[10px] text-[#1d84d8]" />;
  if (name === 'folder') return <Folder className="size-[12px]" />;
  if (name === 'skype') return <FaSkype className="size-[11px] text-[#2fb4ec]" />;
  return (
    <svg viewBox="0 0 24 24" className="size-[12px]">
      {name === 'store' && (
        <>
          <path d="M8 7V3h8v4M2 7h20v15H2z" fill="#f4f4f4" stroke="#f4f4f4" strokeWidth="1.500" />
          <path d="M7 10h4v4H7z" fill="#e8502f" />
          <path d="M12 10h4v4h-4z" fill="#7db928" />
          <path d="M7 15h4v4H7z" fill="#1ea0e6" />
          <path d="M12 15h4v4h-4z" fill="#f7b50c" />
          <path d="M9 4h6v3H9z" fill="#0e0a18" />
        </>
      )}
      {name === 'chrome' && (
        <>
          <circle cx="12" cy="12" r="11" fill="#f3c02f" />
          <path d="M2.500 6.500A11 11 0 0 1 22 7H12l-5 6z" fill="#dd4b3e" />
          <path d="M2.500 6.500A11 11 0 0 0 12 23l5-9-9 1z" fill="#2fa05a" />
          <circle cx="12" cy="12" r="5" fill="#4a8af4" stroke="#fff" strokeWidth="1.500" />
        </>
      )}
      {name === 'tools' && (
        <>
          <path d="M2 3h10v11H2z" fill="#f0b92f" />
          <path d="m14 11 7-7M14 21l7-6M7 22l6-7" stroke="#b8aa80" strokeWidth="3" />
          <circle cx="7" cy="17" r="4" fill="#c99b27" />
        </>
      )}
      {name === 'horse' && (
        <>
          <path d="M5 3c5-2 8 0 8 4 5 2 8 6 9 12-2 3-5 4-9 4-6 0-9-4-8-9 1-3-3-2-3-5z" fill="#aeb0b2" />
          <circle cx="14" cy="16" r="3" fill="#555" />
          <path d="m7 6 3 4" stroke="#444" strokeWidth="1.500" />
        </>
      )}
      {name === 'note' && (
        <>
          <path d="m8 3 14 2-5 17L2 19z" fill="#9fd6dd" />
          <path d="m8 3 14 2-1 4-14-2z" fill="#4e97a6" />
        </>
      )}
      {name === 'paint' && (
        <>
          <path d="M3 2h18v20H3z" fill="#e8eef8" />
          <path d="M5 4h14v8H5z" fill="#356bc4" />
          <path d="m7 20 12-12" stroke="#d04444" strokeWidth="2.500" />
        </>
      )}
      {name === 'outlook' && (
        <>
          <path d="M11 5h12v14H11z" fill="#e8f2fb" stroke="#1471c4" strokeWidth="2" />
          <path d="M1 3h13v18H1z" fill="#0f6cbd" />
          <circle cx="7.500" cy="12" r="3.500" fill="none" stroke="#fff" strokeWidth="2" />
        </>
      )}
      {name === 'rdp' && (
        <>
          <path d="M2 3h17v12H2z" fill="#3b63dc" stroke="#dfe6f5" strokeWidth="2" />
          <path d="M12 15h8v6h-8z" fill="#ddd" />
          <circle cx="19" cy="19" r="4" fill="#5aa865" />
        </>
      )}
      {name === 'green' && (
        <>
          <path d="M1 1h22v22H1z" fill="#139a4a" />
          <path d="M6 17c-3-2 1-10 5-12 4 0 6 5 7 9 0 4-8 5-12 3zM8 12c3-4 5 2 8-1" fill="none" stroke="#fff" strokeWidth="1.800" />
        </>
      )}
      {name === 'ppt' && (
        <>
          <path d="M12 4h11v16H12z" fill="#f7e4dc" stroke="#d24726" strokeWidth="1.500" />
          <path d="M1 2h14v20H1z" fill="#d24726" />
          <path d="M6 18V7h4c3 0 3 5 0 5H6" fill="none" stroke="#fff" strokeWidth="2.200" />
        </>
      )}
      {name === 'zoom' && (
        <>
          <rect x="1" y="1" width="22" height="22" rx="8" fill="#4a8cff" />
          <path d="M5 8h9v8H5zM15 11l4-3v8l-4-3z" fill="#fff" />
        </>
      )}
    </svg>
  );
}

const DOCK = ['edge', 'folder', 'store', 'chrome', 'skype', 'tools', 'horse', 'note', 'paint', 'outlook', 'rdp', 'green', 'ppt', 'zoom'];

function HostTaskbar() {
  return (
    <footer className="flex h-[20px] shrink-0 items-center bg-[#130b1b] font-['Liberation_Sans',sans-serif] text-white">
      <button type="button" aria-label="Start" className="flex w-[24px] justify-center"><FaWindows className="size-[8px]" /></button>
      <label className="flex h-full w-[172px] items-center bg-[#f2f2f2] px-[5px] text-[#333]">
        <span className="size-[10px] rounded-full border-2 border-[#222]" />
        <input aria-label="Search" placeholder="Type here to search" className="ml-[5px] min-w-0 flex-1 text-[7px] outline-none placeholder:text-[#444]" />
        <Mic className="size-[9px]" />
      </label>
      <svg viewBox="0 0 16 16" className="ml-[7px] size-[9px]" fill="none" stroke="#ddd" strokeWidth="1.500">
        <path d="M1 1v2h8V1M1 6h8v4H1zM1 15v-2h8v2M13 1v14M12 7h3" />
      </svg>
      <div className="ml-[9px] flex h-full w-[344px]">
        {DOCK.map((n) => (
          <span
            key={n}
            className={`flex flex-1 items-center justify-center border-b ${n === 'chrome' ? 'border-[#76b9ed] bg-[#3d3a46]' : n === 'ppt' || n === 'zoom' ? 'border-[#76b9ed]' : 'border-transparent'}`}
          >
            <DockIcon name={n} />
          </span>
        ))}
      </div>
      <div className="ml-auto flex items-center pr-[8px] text-center text-[6px]/[9px]">
        <Users className="size-[8px]" />
        <ChevronUp className="ml-[12px] size-[8px]" />
        <Monitor className="ml-[8px] size-[8px]" />
        <div className="ml-[6px] w-[15px]">ENG<br />US</div>
        <div className="ml-[4px] w-[30px]">8:01 PM<br />7/22/2019</div>
        <span className="ml-[6px] grid *:col-start-1 *:row-start-1">
          <MessageSquareText className="size-[10px] fill-white text-[#444]" />
          <span className="mt-[4px] ml-[4px] rounded-full bg-[#444] px-px text-[5px]/[6px]">23</span>
        </span>
      </div>
    </footer>
  );
}

export default function App() {
  return (
    <div className="flex h-screen flex-col overflow-hidden">
      <BrowserChrome />
      <RemoteDesktop />
      <DownloadShelf />
      <HostTaskbar />
    </div>
  );
}
